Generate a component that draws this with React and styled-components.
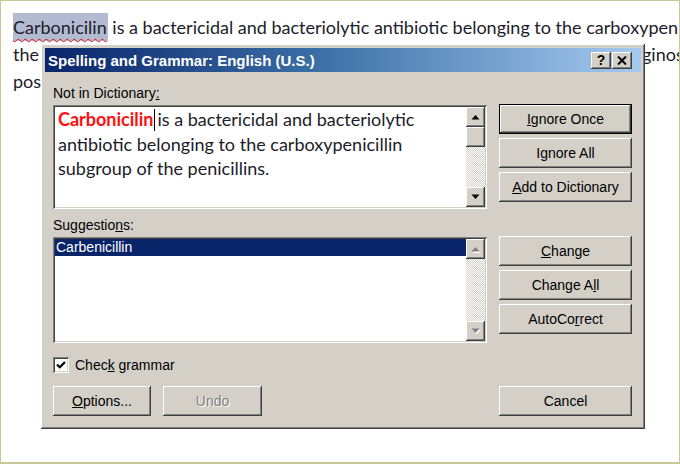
import styled, { createGlobalStyle } from "styled-components";

const GlobalStyle = createGlobalStyle`
  html, body {
    margin: 0;
    padding: 0;
    background: #ffffff;
  }
`;

const face = `"Liberation Sans", Arial, sans-serif`;
const docFace = `Lato, "Open Sans", sans-serif`;

const raised = `
  box-shadow: inset -1px -1px #404040, inset 1px 1px #ffffff,
    inset -2px -2px #808080, inset 2px 2px #d4d0c8;
`;

const sunken = `
  box-shadow: inset 1px 1px #808080, inset -1px -1px #ffffff,
    inset 2px 2px #404040, inset -2px -2px #d4d0c8;
`;

export default function App() {
  return (
    <>
      <GlobalStyle />
      <Page>
        <Doc>
          <Line>
            <Misspelled>Carbonicilin</Misspelled> is a bactericidal and bacteriolytic antibiotic belonging to the carboxypenicillin
          </Line>
          <Line>
            the carboxypenicillin subgroup of the penicillins. It's used for Pseudomonas aeruginosa
          </Line>
          <Line>positive bacteria.</Line>
        </Doc>

        <Dialog>
          <TitleBar>
            <Title>Spelling and Grammar: English (U.S.)</Title>
            <TitleButtons>
              <CaptionButton>?</CaptionButton>
              <CaptionButton>
                <svg width="10" height="9" viewBox="0 0 10 9">
                  <path d="M1 0.5 L9 8.5 M9 0.5 L1 8.5" stroke="#000" strokeWidth="2" />
                </svg>
              </CaptionButton>
            </TitleButtons>
          </TitleBar>

          <Body>
            <Label>
              Not in Dictionary<u>:</u>
            </Label>
            <span />
            <TextBox>
              <TextContent>
                <Bad>Carbonicilin</Bad>
                <Caret />
                is a bactericidal and bacteriolytic antibiotic belonging to the carboxypenicillin subgroup of the penicillins.
              </TextContent>
              <ScrollBar>
                <ArrowButton><Arrow up /></ArrowButton>
                <Thumb />
                <Track />
                <ArrowButton><Arrow /></ArrowButton>
              </ScrollBar>
            </TextBox>
            <ButtonStack>
              <Button isDefault><u>I</u>gnore Once</Button>
              <Button>I<u>g</u>nore All</Button>
              <Button><u>A</u>dd to Dictionary</Button>
            </ButtonStack>

            <Label top={8}>
              Suggestio<u>n</u>s:
            </Label>
            <span />
            <ListBox>
              <ListItems>
                <ListItem selected>Carbenicillin</ListItem>
              </ListItems>
              <ScrollBar>
                <ArrowButton><Arrow up disabled /></ArrowButton>
                <Track />
                <ArrowButton><Arrow disabled /></ArrowButton>
              </ScrollBar>
            </ListBox>
            <ButtonStack>
              <Button><u>C</u>hange</Button>
              <Button>Change A<u>l</u>l</Button>
              <Button>AutoCo<u>r</u>rect</Button>
            </ButtonStack>

            <CheckRow>
              <CheckBox>
                <svg width="10" height="10" viewBox="0 0 10 10">
                  <path d="M1 4.5 L3.8 7.3 L9 2" stroke="#000" strokeWidth="2.2" fill="none" />
                </svg>
              </CheckBox>
              <span>Chec<u>k</u> grammar</span>
            </CheckRow>
            <span />

            <BottomRow>
              <Button width={98}><u>O</u>ptions...</Button>
              <Button width={99} disabled>Undo</Button>
            </BottomRow>
            <BottomRight>
              <Button>Cancel</Button>
            </BottomRight>
          </Body>
        </Dialog>
      </Page>
    </>
  );
}

function Arrow({ up, disabled }) {
  return (
    <svg width="10" height="7" viewBox="0 0 10 7">
      {disabled && (
        <path d={up ? "M1.5 6 L5.5 2 L9.5 6 Z" : "M1.5 1 L9.5 1 L5.5 5 Z"} fill="#ffffff" transform="translate(0 1)" />
      )}
      <path
        d={up ? "M0.5 5.5 L4.5 1 L8.5 5.5 Z" : "M0.5 0.5 L8.5 0.5 L4.5 5 Z"}
        fill={disabled ? "#808080" : "#000000"}
      />
    </svg>
  );
}

const Page = styled.div`
  position: relative;
  width: 680px;
  height: 464px;
  box-sizing: border-box;
  border: 1px solid #c8c896;
  border-bottom-width: 2px;
  overflow: hidden;
  background: #ffffff;
`;

const Doc = styled.div`
  padding: 13px 0 0 12px;
  font-family: ${docFace};
  font-size: 18px;
  line-height: 27px;
  color: #1c1c2a;
`;

const Line = styled.div`
  white-space: nowrap;
`;

const Misspelled = styled.span`
  background: #b3bbd2;
  padding: 3px 1px 3px 0;
  text-decoration: underline wavy #e01010;
  text-decoration-thickness: 1px;
  text-underline-offset: 4px;
`;

const Dialog = styled.div`
  position: absolute;
  left: 40px;
  top: 43px;
  width: 604px;
  height: 385px;
  box-sizing: border-box;
  background: #d4d0c8;
  ${raised}
  padding: 4px;
  display: flex;
  flex-direction: column;
  font-family: ${face};
  font-size: 14px;
  color: #000;
`;

const TitleBar = styled.div`
  height: 24px;
  display: flex;
  align-items: center;
  justify-content: space-between;
  padding: 0 9px 0 3px;
  background: linear-gradient(to right, #0a246a 0%, #3a6ea5 45%, #a6caf0 100%);
`;

const Title = styled.span`
  color: #ffffff;
  font-weight: bold;
  font-size: 15px;
`;

const TitleButtons = styled.div`
  display: flex;
  gap: 1px;
`;

const CaptionButton = styled.div`
  width: 20px;
  height: 17px;
  display: flex;
  align-items: center;
  justify-content: center;
  background: #d4d0c8;
  ${raised}
  font-weight: bold;
  font-size: 14px;
  line-height: 1;
`;

const Body = styled.div`
  display: grid;
  grid-template-columns: 434px 133px;
  column-gap: 12px;
  padding: 13px 0 0 8px;
`;

const Label = styled.div`
  height: 16px;
  line-height: 16px;
  margin-top: ${(p) => p.top || 0}px;
  margin-bottom: 4px;
`;

const TextBox = styled.div`
  height: 104px;
  box-sizing: border-box;
  background: #ffffff;
  ${sunken}
  padding: 2px;
  display: flex;
`;

const TextContent = styled.div`
  flex: 1;
  padding: 0 8px 0 3px;
  font-family: ${docFace};
  font-size: 18px;
  line-height: 24.5px;
  color: #1c1c2a;
`;

const Bad = styled.span`
  color: #ff1010;
  font-weight: bold;
`;

const Caret = styled.span`
  display: inline-block;
  width: 1px;
  height: 22px;
  margin: 0 2px 0 1px;
  vertical-align: -5px;
  background: #000000;
`;

const ScrollBar = styled.div`
  width: 19px;
  display: flex;
  flex-direction: column;
`;

const ArrowButton = styled.div`
  height: 20px;
  flex: none;
  display: flex;
  align-items: center;
  justify-content: center;
  background: #d4d0c8;
  ${raised}
`;

const Thumb = styled(ArrowButton)``;

const Track = styled.div`
  flex: 1;
  background: repeating-conic-gradient(#ffffff 0 25%, #d4d0c8 0 50%) 0 0 / 2px 2px;
`;

const ButtonStack = styled.div`
  display: flex;
  flex-direction: column;
  gap: 4px;
  margin-top: -1px;
`;

const Button = styled.div`
  width: ${(p) => (p.width ? `${p.width}px` : "100%")};
  height: 30px;
  box-sizing: border-box;
  display: flex;
  align-items: center;
  justify-content: center;
  background: #d4d0c8;
  color: ${(p) => (p.disabled ? "#808080" : "#000")};
  text-shadow: ${(p) => (p.disabled ? "1px 1px #ffffff" : "none")};
  ${(p) =>
    p.isDefault
      ? `border: 1px solid #000; box-shadow: inset -1px -1px #404040, inset 1px 1px #ffffff, inset -2px -2px #808080;`
      : raised}
`;

const ListBox = styled(TextBox)`
  height: 106px;
`;

const ListItems = styled.div`
  flex: 1;
`;

const ListItem = styled.div`
  height: 17px;
  line-height: 17px;
  padding-left: 1px;
  background: ${(p) => (p.selected ? "#0a246a" : "transparent")};
  color: ${(p) => (p.selected ? "#ffffff" : "#000")};
`;

const CheckRow = styled.div`
  margin-top: 14px;
  height: 16px;
  display: flex;
  align-items: center;
  gap: 6px;
`;

const CheckBox = styled.div`
  width: 16px;
  height: 16px;
  box-sizing: border-box;
  background: #ffffff;
  ${sunken}
  display: flex;
  align-items: center;
  justify-content: center;
`;

const BottomRow = styled.div`
  margin-top: 13px;
  display: flex;
  gap: 12px;
`;

const BottomRight = styled.div`
  margin-top: 13px;
  display: flex;
`;
